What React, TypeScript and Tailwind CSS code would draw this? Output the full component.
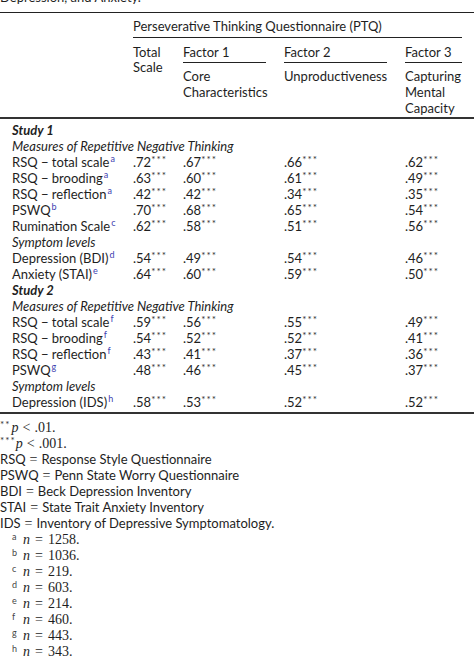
import React from "react";

// ----------- DATA -----------
type Row =
  | { kind: "study"; label: string }
  | { kind: "group"; label: string }
  | { kind: "data"; label: string; note: string; values: string[] };

const ROWS: Row[] = [
  { kind: "study", label: "Study 1" },
  { kind: "group", label: "Measures of Repetitive Negative Thinking" },
  { kind: "data", label: "RSQ − total scale", note: "a", values: [".72", ".67", ".66", ".62"] },
  { kind: "data", label: "RSQ − brooding", note: "a", values: [".63", ".60", ".61", ".49"] },
  { kind: "data", label: "RSQ − reflection", note: "a", values: [".42", ".42", ".34", ".35"] },
  { kind: "data", label: "PSWQ", note: "b", values: [".70", ".68", ".65", ".54"] },
  { kind: "data", label: "Rumination Scale", note: "c", values: [".62", ".58", ".51", ".56"] },
  { kind: "group", label: "Symptom levels" },
  { kind: "data", label: "Depression (BDI)", note: "d", values: [".54", ".49", ".54", ".46"] },
  { kind: "data", label: "Anxiety (STAI)", note: "e", values: [".64", ".60", ".59", ".50"] },
  { kind: "study", label: "Study 2" },
  { kind: "group", label: "Measures of Repetitive Negative Thinking" },
  { kind: "data", label: "RSQ − total scale", note: "f", values: [".59", ".56", ".55", ".49"] },
  { kind: "data", label: "RSQ − brooding", note: "f", values: [".54", ".52", ".52", ".41"] },
  { kind: "data", label: "RSQ − reflection", note: "f", values: [".43", ".41", ".37", ".36"] },
  { kind: "data", label: "PSWQ", note: "g", values: [".48", ".46", ".45", ".37"] },
  { kind: "group", label: "Symptom levels" },
  { kind: "data", label: "Depression (IDS)", note: "h", values: [".58", ".53", ".52", ".52"] },
];

const ABBREVS = [
  ["RSQ", "Response Style Questionnaire"],
  ["PSWQ", "Penn State Worry Questionnaire"],
  ["BDI", "Beck Depression Inventory"],
  ["STAI", "State Trait Anxiety Inventory"],
  ["IDS", "Inventory of Depressive Symptomatology."],
];

const SAMPLES = [
  ["a", "1258"],
  ["b", "1036"],
  ["c", "219"],
  ["d", "603"],
  ["e", "214"],
  ["f", "460"],
  ["g", "443"],
  ["h", "343"],
];

const GRID = "grid grid-cols-[133px_50px_101px_121px_69px]";

function Stars({ n = 3 }: { n?: number }) {
  return (
    <span className="relative -top-[4px] text-[10px] leading-none tracking-[1px] text-[#333]">
      {"*".repeat(n)}
    </span>
  );
}

export default function App() {
  return (
    <div className="w-[474px] h-[658px] overflow-hidden bg-white text-[#1e1e1e] font-['Lato',sans-serif] text-[13px] leading-[16px]">
      {/* caption, cut off by the top edge */}
      <p className="-mt-[11px] h-[16px] whitespace-nowrap">Depression, and Anxiety.</p>

      {/* ----------- HEADER ----------- */}
      <div className="mt-[7px] border-t border-[#222]">
        <div className="ml-[133px] mr-[12px] pt-[5px] pb-[3px] border-b border-[#222]">
          Perseverative Thinking Questionnaire (PTQ)
        </div>

        <div className={`${GRID} pt-[6px] pb-[1px] border-b-2 border-[#333]`}>
          <div className="col-start-2 pt-[1px] leading-[15px]">
            Total
            <br />
            Scale
          </div>

          <div className="mr-[18px]">
            <div className="pb-[2px] border-b border-[#222]">Factor 1</div>
            <div className="pt-[5px]">
              Core
              <br />
              Characteristics
            </div>
          </div>

          <div className="mr-[18px]">
            <div className="pb-[2px] border-b border-[#222]">Factor 2</div>
            <div className="pt-[5px]">Unproductiveness</div>
          </div>

          <div className="mr-[12px]">
            <div className="pb-[2px] border-b border-[#222]">Factor 3</div>
            <div className="pt-[5px]">
              Capturing
              <br />
              Mental
              <br />
              Capacity
            </div>
          </div>
        </div>
      </div>

      {/* ----------- BODY ----------- */}
      <div className="pt-[3px] pb-[2px] border-b-2 border-[#333]">
        {ROWS.map((r, i) => {
          if (r.kind === "study")
            return (
              <div key={i} className="h-[16px] pl-[12px] font-bold italic">
                {r.label}
              </div>
            );
          if (r.kind === "group")
            return (
              <div key={i} className="h-[16px] pl-[12px] italic whitespace-nowrap">
                {r.label}
              </div>
            );
          return (
            <div key={i} className={`${GRID} h-[16px]`}>
              <div className="pl-[12px] whitespace-nowrap">
                {r.label}
                <span className="relative -top-[5px] ml-[1px] text-[9px] leading-none text-[#4040b0]">
                  {r.note}
                </span>
              </div>
              {r.values.map((v, j) => (
                <div key={j} className="whitespace-nowrap">
                  {v}
                  <Stars />
                </div>
              ))}
            </div>
          );
        })}
      </div>

      {/* ----------- FOOTNOTES ----------- */}
      <div className="pt-[5px]">
        <div className="h-[16px] whitespace-nowrap">
          <Stars n={2} />
          <span className="font-['Liberation_Serif',serif] text-[14px]">
            <i className="ml-[1px]">p</i>
            <span className="mx-[4px]">&lt;</span>.01.
          </span>
        </div>
        <div className="h-[16px] whitespace-nowrap">
          <Stars />
          <span className="font-['Liberation_Serif',serif] text-[14px]">
            <i>p</i>
            <span className="mx-[4px]">&lt;</span>.001.
          </span>
        </div>

        {ABBREVS.map(([k, v]) => (
          <div key={k} className="h-[16px] whitespace-nowrap">
            {k}
            <span className="mx-[4px] font-['Liberation_Serif',serif] text-[14px]">=</span>
            {v}
          </div>
        ))}

        {SAMPLES.map(([k, v]) => (
          <div key={k} className="h-[16px] whitespace-nowrap">
            <span className="inline-block w-[23px] pl-[12px] relative -top-[4px] text-[9px] leading-none text-[#444]">
              {k}
            </span>
            <span className="font-['Liberation_Serif',serif] text-[14px]">
              <i>n</i>
              <span className="mx-[5px]">=</span>
              {v}.
            </span>
          </div>
        ))}
      </div>
    </div>
  );
}
